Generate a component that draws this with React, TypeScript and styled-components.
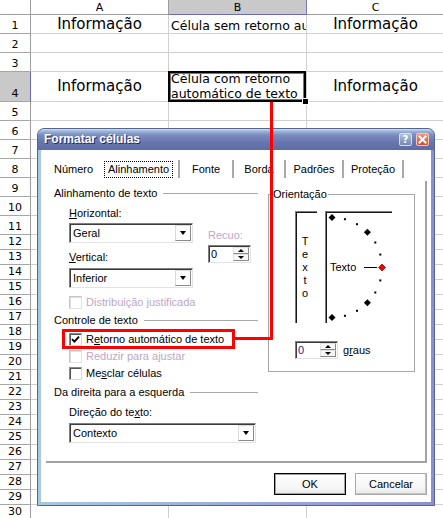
import { Fragment, type ReactNode } from 'react'
import styled, { createGlobalStyle } from 'styled-components'

const GlobalStyle = createGlobalStyle`
  html, body {
    margin: 0;
    padding: 0;
    background: #ffffff;
  }
  #root {
    width: 443px;
    height: 518px;
  }
`

// rows 1..30 of the sheet, border included
const ROW_HEIGHTS = [19, 19, 19, 30, 19, 19, 19, 19, 19, 19, 19, ...Array(19).fill(15)]

const CELLS: Record<number, string[]> = {
  1: ['Informação', 'Célula sem retorno automático de texto', 'Informação'],
  4: ['Informação', 'Célula com retorno automático de texto', 'Informação'],
}

const ACTIVE_ROW = 4

export default function App() {
  return (
    <Page>
      <GlobalStyle />
      <Sheet $rows={['15px', ...ROW_HEIGHTS.map((h) => `${h}px`)].join(' ')}>
        <Corner />
        {['A', 'B', 'C'].map((c) => (
          <ColHead key={c} $active={c === 'B'}>
            {c}
          </ColHead>
        ))}
        {ROW_HEIGHTS.map((_, i) => {
          const n = i + 1
          const data = CELLS[n]
          return (
            <Fragment key={n}>
              <RowHead $active={n === ACTIVE_ROW}>{n}</RowHead>
              <DataCell $center $big>
                {data?.[0]}
              </DataCell>
              <DataCell $wrap={n === ACTIVE_ROW} $selected={n === ACTIVE_ROW}>
                {data && <CellText $wrap={n === ACTIVE_ROW}>{data[1]}</CellText>}
              </DataCell>
              <DataCell $center $big>
                {data?.[2]}
              </DataCell>
            </Fragment>
          )
        })}
      </Sheet>

      <Dialog>
        <TitleBar>
          <Title>Formatar células</Title>
          <CaptionButtons>
            <CapButton $kind="help">?</CapButton>
            <CapButton $kind="close">
              <svg width="9" height="9" viewBox="0 0 9 9">
                <path d="M1.5 1.5 L7.5 7.5 M7.5 1.5 L1.5 7.5" stroke="#fff" strokeWidth="2" strokeLinecap="square" />
              </svg>
            </CapButton>
          </CaptionButtons>
        </TitleBar>

        <Body>
          <TabStrip>
            <Tab $w={58} $left>
              Número
            </Tab>
            <Tab $w={69} $selected>
              Alinhamento
            </Tab>
            <TabSep $gap={5} />
            <Tab $w={52}>Fonte</Tab>
            <TabSep />
            <Tab $w={50}>Borda</Tab>
            <TabSep />
            <Tab $w={56}>Padrões</Tab>
            <TabSep />
            <Tab $w={58}>Proteção</Tab>
            <TabSep />
          </TabStrip>

          <TabPanel>
            <LeftCol>
              <GroupHeader $mt={0}>Alinhamento de texto</GroupHeader>
              <Indent>
                <AlignRow>
                  <Column>
                    <Label $mt={0}>
                      <Key>H</Key>orizontal:
                    </Label>
                    <Select $w={124} $mt={3}>
                      <span>Geral</span>
                      <DropButton />
                    </Select>
                    <Label $mt={8}>
                      <Key>V</Key>ertical:
                    </Label>
                    <Select $w={124} $mt={4}>
                      <span>Inferior</span>
                      <DropButton />
                    </Select>
                  </Column>
                  <Column>
                    <Label $mt={22} $disabled>
                      Recuo:
                    </Label>
                    <Spin $mt={3}>
                      <span>0</span>
                      <SpinButtons>
                        <SpinButton $up />
                        <SpinButton />
                      </SpinButtons>
                    </Spin>
                  </Column>
                </AlignRow>
                <CheckRow $mt={8} disabled>
                  Distribuição justificada
                </CheckRow>
              </Indent>

              <GroupHeader $mt={5}>Controle de texto</GroupHeader>
              <Indent>
                <CheckRow $mt={6} checked>
                  R<Key>e</Key>torno automático de texto
                </CheckRow>
                <CheckRow $mt={4} disabled>
                  Reduzir para ajustar
                </CheckRow>
                <CheckRow $mt={4}>
                  Me<Key>s</Key>clar células
                </CheckRow>
              </Indent>

              <GroupHeader $mt={6}>Da direita para a esquerda</GroupHeader>
              <Indent>
                <Label $mt={7}>
                  Direção do te<Key>x</Key>to:
                </Label>
                <Select $w={187} $mt={4}>
                  <span>Contexto</span>
                  <DropButton />
                </Select>
              </Indent>
            </LeftCol>

            <GroupBox>
              <GroupTitle>Orientação</GroupTitle>
              <DialRow>
                <Well $w={22}>
                  <VerticalLetters>
                    {'Texto'.split('').map((ch, i) => (
                      <span key={i}>{ch}</span>
                    ))}
                  </VerticalLetters>
                </Well>
                <Well $w={67}>
                  <DialLabel>Texto</DialLabel>
                  <DialMarks />
                </Well>
              </DialRow>
              <SpinRow>
                <Spin $mt={0}>
                  <DegreeValue>0</DegreeValue>
                  <SpinButtons>
                    <SpinButton $up />
                    <SpinButton />
                  </SpinButtons>
                </Spin>
                <span>
                  g<Key>r</Key>aus
                </span>
              </SpinRow>
            </GroupBox>
          </TabPanel>

          <ButtonRow>
            <PushButton $default>OK</PushButton>
            <PushButton>Cancelar</PushButton>
          </ButtonRow>
        </Body>
      </Dialog>

      <CalloutBox />
      <CalloutArm />
      <CalloutStem />
    </Page>
  )
}

function CheckRow({
  children,
  checked,
  disabled,
  $mt,
}: {
  children: ReactNode
  checked?: boolean
  disabled?: boolean
  $mt: number
}) {
  return (
    <CheckLine $mt={$mt} $disabled={disabled}>
      <CheckBox $disabled={disabled}>
        {checked && (
          <svg width="9" height="9" viewBox="0 0 9 9">
            <path d="M1 4.2 L3.4 6.6 L8 1.6" stroke="#000" strokeWidth="1.9" fill="none" />
          </svg>
        )}
      </CheckBox>
      <span>{children}</span>
    </CheckLine>
  )
}

function DialMarks() {
  const cx = 6
  const cy = 55.5
  const r = 50
  const marks = []
  for (let a = 90; a >= -90; a -= 15) {
    const rad = (a * Math.PI) / 180
    const x = cx + r * Math.cos(rad)
    const y = cy - r * Math.sin(rad)
    if (a === 0) {
      marks.push(
        <polygon
          key={a}
          points={`${x},${y - 3.5} ${x + 3.5},${y} ${x},${y + 3.5} ${x - 3.5},${y}`}
          fill="#ff0000"
          stroke="#7a0000"
          strokeWidth="0.7"
        />,
      )
    } else if (a % 45 === 0) {
      marks.push(
        <polygon key={a} points={`${x},${y - 3.5} ${x + 3.5},${y} ${x},${y + 3.5} ${x - 3.5},${y}`} fill="#000" />,
      )
    } else {
      marks.push(<rect key={a} x={x - 1} y={y - 1} width="2" height="2" fill="#000" />)
    }
  }
  return (
    <DialSvg width="66" height="111" viewBox="0 0 66 111">
      <line x1="38" y1="55.5" x2="51" y2="55.5" stroke="#000" strokeWidth="1" />
      {marks}
    </DialSvg>
  )
}

const Page = styled.div`
  position: relative;
  width: 443px;
  height: 518px;
  overflow: hidden;
  background: #fff;
`

/* planilha */

const Sheet = styled.div<{ $rows: string }>`
  display: grid;
  grid-template-columns: 31px 138px 138px 138px;
  grid-template-rows: ${(p) => p.$rows};
  font-family: 'DejaVu Sans', Verdana, sans-serif;
  color: #000;
`

const Corner = styled.div`
  border-right: 1px solid #9d9d9d;
  border-bottom: 1px solid #9d9d9d;
`

const ColHead = styled.div<{ $active?: boolean }>`
  display: flex;
  align-items: center;
  justify-content: center;
  font-size: 11px;
  line-height: 13px;
  background: ${(p) => (p.$active ? '#c9c9c9' : '#fff')};
  border-right: 1px solid ${(p) => (p.$active ? '#7a7ab8' : '#9d9d9d')};
  border-bottom: 1px solid ${(p) => (p.$active ? '#6a6ab0' : '#9d9d9d')};
`

const RowHead = styled.div<{ $active?: boolean }>`
  display: flex;
  align-items: flex-end;
  justify-content: center;
  padding-bottom: 1px;
  font-size: 11px;
  line-height: 13px;
  overflow: hidden;
  background: ${(p) => (p.$active ? '#c9c9c9' : '#fff')};
  border-right: 1px solid ${(p) => (p.$active ? '#6a6ab0' : '#9d9d9d')};
  border-bottom: 1px solid #a6a6a6;
`

const DataCell = styled.div<{ $big?: boolean; $center?: boolean; $wrap?: boolean; $selected?: boolean }>`
  position: relative;
  display: flex;
  min-width: 0;
  align-items: ${(p) => (p.$center ? 'center' : 'flex-end')};
  justify-content: ${(p) => (p.$center ? 'center' : 'flex-start')};
  padding-left: ${(p) => (p.$center ? 0 : 2)}px;
  overflow: ${(p) => (p.$selected ? 'visible' : 'hidden')};
  font-size: ${(p) => (p.$big ? 15 : 12.5)}px;
  line-height: ${(p) => (p.$big ? 17 : 14.5)}px;
  border-right: 1px solid #d0d0d0;
  border-bottom: 1px solid #d0d0d0;

  ${(p) =>
    p.$selected &&
    `
    &::after {
      content: '';
      position: absolute;
      top: -1px;
      left: -1px;
      right: 0;
      bottom: -1px;
      border: 2px solid #000;
      box-shadow: inset 0 0 0 1px #777;
    }
    &::before {
      content: '';
      position: absolute;
      right: -2px;
      bottom: -3px;
      width: 5px;
      height: 5px;
      background: #000;
      box-shadow: 0 0 0 1px #fff;
      z-index: 1;
    }
  `}
`

const CellText = styled.span<{ $wrap?: boolean }>`
  display: block;
  max-width: 135px;
  overflow: hidden;
  white-space: ${(p) => (p.$wrap ? 'normal' : 'nowrap')};
  text-overflow: clip;
`

/* janela */

const Dialog = styled.div`
  position: absolute;
  left: 37px;
  top: 128px;
  z-index: 2;
  width: 398px;
  height: 378px;
  box-sizing: border-box;
  display: flex;
  flex-direction: column;
  padding: 0 3px 3px;
  border: 1px solid #55658e;
  border-radius: 7px 7px 0 0;
  background: linear-gradient(to right, #a7c9dd, #9aa9d9 55%, #8d8fd1);
  font-family: 'Liberation Sans', Arial, sans-serif;
  font-size: 11px;
  line-height: 13px;
  color: #000;
`

const TitleBar = styled.div`
  height: 21px;
  margin: 0 -3px;
  padding: 0 5px 0 6px;
  display: flex;
  align-items: center;
  justify-content: space-between;
  border-radius: 6px 6px 0 0;
  background: linear-gradient(#c6e6f2 0, #a0b8d8 2px, #7a8cc0 6px, #6876b0 13px, #5e6ca6 21px);
`

const Title = styled.span`
  color: #fff;
  font-weight: bold;
  font-size: 12px;
  text-shadow: 1px 1px 0 #262a5e;
`

const CaptionButtons = styled.div`
  display: flex;
  gap: 4px;
`

const CapButton = styled.div<{ $kind: 'help' | 'close' }>`
  width: 13px;
  height: 13px;
  box-sizing: border-box;
  display: flex;
  align-items: center;
  justify-content: center;
  border: 1px solid ${(p) => (p.$kind === 'close' ? '#f6c9b8' : '#d3dfec')};
  border-radius: 2px;
  background: ${(p) =>
    p.$kind === 'close' ? 'linear-gradient(#f3927a, #d4502e)' : 'linear-gradient(#b2c2d8, #7488ad)'};
  color: #fff;
  font-family: 'DejaVu Sans', sans-serif;
  font-weight: bold;
  font-size: 10px;
  line-height: 10px;
`

const Body = styled.div`
  flex: 1;
  display: flex;
  flex-direction: column;
  align-items: flex-start;
  padding: 9px 4px 0 5px;
  background: #fff;
`

const TabStrip = styled.div`
  display: flex;
  align-items: center;
  height: 20px;
`

const Tab = styled.div<{ $w: number; $selected?: boolean; $left?: boolean }>`
  width: ${(p) => p.$w}px;
  box-sizing: border-box;
  padding: 1px 0 1px ${(p) => (p.$left ? 8 : 0)}px;
  text-align: ${(p) => (p.$left ? 'left' : 'center')};
  border: 1px dotted ${(p) => (p.$selected ? '#000' : 'transparent')};
  ${(p) => (p.$left ? 'border: none;' : '')}
`

const TabSep = styled.div<{ $gap?: number }>`
  width: 2px;
  height: 18px;
  margin-left: ${(p) => p.$gap ?? 0}px;
  background: #a9a9a9;
`

const TabPanel = styled.div`
  width: 381px;
  height: 282px;
  margin-top: 2px;
  box-sizing: border-box;
  display: flex;
  align-items: flex-start;
  padding: 6px 0 0 8px;
  border-right: 2px solid #a2a2a2;
  border-bottom: 2px solid #a2a2a2;
`

const LeftCol = styled.div`
  width: 204px;
  display: flex;
  flex-direction: column;
`

const GroupHeader = styled.div<{ $mt: number }>`
  display: flex;
  align-items: center;
  gap: 6px;
  margin-top: ${(p) => p.$mt}px;

  &::after {
    content: '';
    flex: 1;
    height: 1px;
    background: #a8a8a8;
  }
`

const Indent = styled.div`
  display: flex;
  flex-direction: column;
  align-items: flex-start;
  padding-left: 15px;
`

const AlignRow = styled.div`
  display: flex;
  gap: 15px;
  margin-top: 7px;
`

const Column = styled.div`
  display: flex;
  flex-direction: column;
  align-items: flex-start;
`

const Label = styled.div<{ $mt: number; $disabled?: boolean }>`
  margin-top: ${(p) => p.$mt}px;
  color: ${(p) => (p.$disabled ? '#c0a6c3' : '#000')};
`

const Key = styled.span`
  text-decoration: underline;
`

const Sunken = styled.div<{ $mt: number }>`
  margin-top: ${(p) => p.$mt}px;
  box-sizing: border-box;
  display: flex;
  align-items: center;
  justify-content: space-between;
  background: #fff;
  border: 1px solid;
  border-color: #7f7f7f #e3e3e3 #e3e3e3 #7f7f7f;
  box-shadow: inset 1px 1px 0 #3c3c3c;
`

const Select = styled(Sunken)<{ $w: number }>`
  width: ${(p) => p.$w}px;
  height: 20px;
  padding: 1px 1px 1px 3px;
`

const DropButton = styled.span`
  width: 16px;
  height: 16px;
  box-sizing: border-box;
  display: flex;
  align-items: center;
  justify-content: center;
  background: #fff;
  border: 1px solid;
  border-color: #dadada #8a8a8a #8a8a8a #dadada;

  &::after {
    content: '';
    border-left: 3.5px solid transparent;
    border-right: 3.5px solid transparent;
    border-top: 4px solid #000;
  }
`

const Spin = styled(Sunken)`
  width: 43px;
  height: 18px;
  padding: 1px 1px 1px 2px;
`

const SpinButtons = styled.div`
  display: flex;
  flex-direction: column;
`

const SpinButton = styled.span<{ $up?: boolean }>`
  width: 16px;
  height: 7px;
  box-sizing: border-box;
  display: flex;
  align-items: center;
  justify-content: center;
  background: #f7f7f7;
  border: 1px solid;
  border-color: #e2e2e2 #8a8a8a #8a8a8a #e2e2e2;

  &::after {
    content: '';
    border-left: 3px solid transparent;
    border-right: 3px solid transparent;
    ${(p) => (p.$up ? 'border-bottom: 3px solid #000;' : 'border-top: 3px solid #000;')}
  }
`

const DegreeValue = styled.span`
  color: #2b2086;
`

const CheckLine = styled.div<{ $mt: number; $disabled?: boolean }>`
  display: flex;
  align-items: center;
  gap: 4px;
  margin-top: ${(p) => p.$mt}px;
  color: ${(p) => (p.$disabled ? '#c0a6c3' : '#000')};
`

const CheckBox = styled.span<{ $disabled?: boolean }>`
  width: 13px;
  height: 13px;
  flex: none;
  box-sizing: border-box;
  display: flex;
  align-items: center;
  justify-content: center;
  background: #fff;
  border: 1px solid;
  border-color: ${(p) => (p.$disabled ? '#c6c6c6 #e4e4e4 #e4e4e4 #c6c6c6' : '#8a8a8a #d8d8d8 #d8d8d8 #8a8a8a')};
  box-shadow: inset 1px 1px 0 ${(p) => (p.$disabled ? '#dedede' : '#555')};
`

const GroupBox = styled.div`
  width: 147px;
  height: 178px;
  margin: 7px 0 0 10px;
  box-sizing: border-box;
  border: 1px solid #a6a6a6;
`

const GroupTitle = styled.div`
  width: fit-content;
  margin: -7px 0 0 3px;
  padding: 0 1px;
  background: #fff;
`

const DialRow = styled.div`
  display: flex;
  gap: 8px;
  margin-top: 10px;
  padding-left: 26px;
`

const Well = styled.div<{ $w: number }>`
  position: relative;
  width: ${(p) => p.$w}px;
  height: 112px;
  box-sizing: border-box;
  display: flex;
  align-items: center;
  border-top: 1px solid #7c7c7c;
  border-left: 1px solid #7c7c7c;
  box-shadow: inset 1px 1px 0 #161616;
`

const VerticalLetters = styled.div`
  flex: 1;
  display: flex;
  flex-direction: column;
  align-items: center;
  padding-right: 3px;
`

const DialLabel = styled.span`
  padding-left: 4px;
`

const DialSvg = styled.svg`
  position: absolute;
  left: 0;
  top: 0;
  overflow: visible;
`

const SpinRow = styled.div`
  display: flex;
  align-items: center;
  gap: 5px;
  margin-top: 18px;
  padding-left: 26px;
`

const ButtonRow = styled.div`
  align-self: stretch;
  display: flex;
  justify-content: flex-end;
  gap: 9px;
  margin-top: 10px;
`

const PushButton = styled.div<{ $default?: boolean }>`
  width: 72px;
  height: 22px;
  box-sizing: border-box;
  display: flex;
  align-items: center;
  justify-content: center;
  border: 1px solid ${(p) => (p.$default ? '#000' : '#a8a8a8')};
  box-shadow: ${(p) => (p.$default ? 'inset 0 0 0 1px #a0a0a0' : 'inset -1px -1px 0 #c4c4c4')};
  background: linear-gradient(#ffffff, #f5f5f5 70%, #e7e7e7);
`

/* anotação vermelha */

const CalloutBox = styled.div`
  position: absolute;
  left: 62px;
  top: 329px;
  width: 173px;
  height: 20px;
  box-sizing: border-box;
  border: 3px solid #ff0000;
  z-index: 3;
`

const CalloutArm = styled.div`
  position: absolute;
  left: 235px;
  top: 337px;
  width: 38px;
  height: 3px;
  background: #ff0000;
  z-index: 3;
`

const CalloutStem = styled.div`
  position: absolute;
  left: 270px;
  top: 102px;
  width: 3px;
  height: 238px;
  background: #ff0000;
  z-index: 3;
`
